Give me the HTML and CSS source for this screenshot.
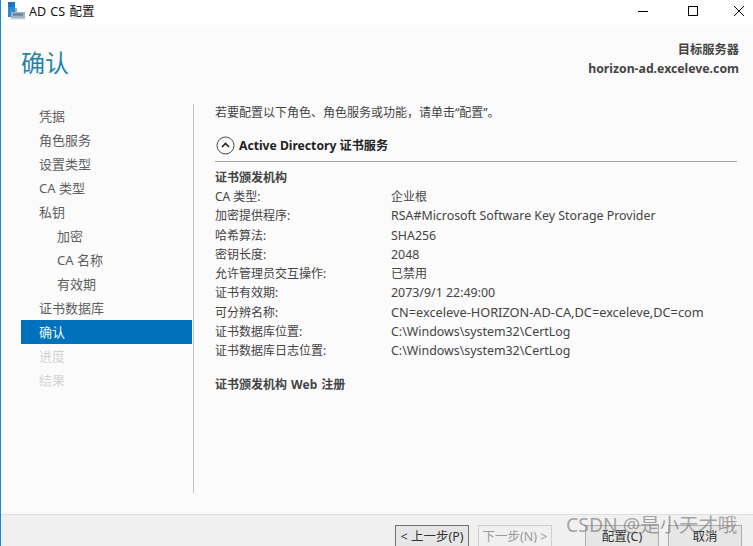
FILE: index.html
```html
<!DOCTYPE html>
<html lang="zh">
<head>
<meta charset="utf-8">
<title>AD CS 配置</title>
<link rel="stylesheet" href="styles.css">
</head>
<body>
<div class="window">
  <div class="titlebar">
    <svg class="app-icon" width="17" height="18" viewBox="0 0 17 18">
      <rect x="0" y="0" width="7" height="5" fill="#1b74c4"/>
      <rect x="0" y="5" width="7" height="10" fill="#2a8ad6"/>
      <rect x="7" y="6" width="2" height="9" fill="#8fb4d0"/>
      <rect x="3" y="10" width="14" height="6" fill="#9fb3c2"/>
      <rect x="5" y="11.5" width="10" height="2" fill="#5f7b92"/>
      <rect x="3" y="16" width="14" height="1.5" fill="#c9d3da"/>
    </svg>
    <span class="app-title">AD CS 配置</span>
    <div class="caption">
      <svg class="cap-btn min" width="12" height="12" viewBox="0 0 12 12"><path d="M1 6.5h10" stroke="#000" stroke-width="1"/></svg>
      <svg class="cap-btn max" width="12" height="12" viewBox="0 0 12 12"><rect x="1.5" y="1.5" width="9" height="9" fill="none" stroke="#000"/></svg>
      <svg class="cap-btn" width="12" height="12" viewBox="0 0 12 12"><path d="M1 1l10 10M11 1L1 11" stroke="#000" stroke-width="1"/></svg>
    </div>
  </div>
  <div class="page">
    <header class="head">
      <h1 class="page-title">确认</h1>
      <div class="server">
        <div>目标服务器</div>
        <div>horizon-ad.exceleve.com</div>
      </div>
    </header>
    <div class="main">
      <nav class="nav">
        <div class="nav-item">凭据</div>
        <div class="nav-item">角色服务</div>
        <div class="nav-item">设置类型</div>
        <div class="nav-item">CA 类型</div>
        <div class="nav-item">私钥</div>
        <div class="nav-item sub">加密</div>
        <div class="nav-item sub">CA 名称</div>
        <div class="nav-item sub">有效期</div>
        <div class="nav-item">证书数据库</div>
        <div class="nav-item active">确认</div>
        <div class="nav-item disabled">进度</div>
        <div class="nav-item disabled">结果</div>
      </nav>
      <section class="content">
        <p class="intro">若要配置以下角色、角色服务或功能，请单击“配置”。</p>
        <div class="section-head">
          <svg width="19" height="19" viewBox="0 0 19 19">
            <circle cx="9.5" cy="9.5" r="8.5" fill="none" stroke="#444" stroke-width="1"/>
            <path d="M6 11l3.5-3.5L13 11" fill="none" stroke="#222" stroke-width="1.6"/>
          </svg>
          <span>Active Directory 证书服务</span>
        </div>
        <h2 class="group">证书颁发机构</h2>
        <dl class="props">
          <dt>CA 类型:</dt><dd class="cjk">企业根</dd>
          <dt>加密提供程序:</dt><dd>RSA#Microsoft Software Key Storage Provider</dd>
          <dt>哈希算法:</dt><dd>SHA256</dd>
          <dt>密钥长度:</dt><dd>2048</dd>
          <dt>允许管理员交互操作:</dt><dd class="cjk">已禁用</dd>
          <dt>证书有效期:</dt><dd>2073/9/1 22:49:00</dd>
          <dt>可分辨名称:</dt><dd class="wide">CN=exceleve-HORIZON-AD-CA,DC=exceleve,DC=com</dd>
          <dt>证书数据库位置:</dt><dd>C:\Windows\system32\CertLog</dd>
          <dt>证书数据库日志位置:</dt><dd>C:\Windows\system32\CertLog</dd>
        </dl>
        <h2 class="group second">证书颁发机构 Web 注册</h2>
      </section>
    </div>
  </div>
  <footer class="footer">
    <button class="btn prev">&lt; 上一步(P)</button>
    <button class="btn next" disabled>下一步(N) &gt;</button>
    <button class="btn conf">配置(C)</button>
    <button class="btn">取消</button>
  </footer>
  <div class="watermark">CSDN @是小天才哦</div>
</div>
</body>
</html>
```
FILE: styles.css
```css
* { box-sizing: border-box; }
html, body { margin: 0; padding: 0; }
body {
  width: 753px;
  height: 546px;
  overflow: hidden;
  font-family: "Noto Sans", "Noto Sans CJK SC", sans-serif;
  font-size: 12.5px;
  color: #444;
  background: #fff;
}
.window {
  position: relative;
  width: 753px;
  height: 546px;
  display: flex;
  flex-direction: column;
  border-left: 1px solid #1e88d8;
}
.titlebar {
  height: 25px;
  display: flex;
  align-items: center;
  background: #fff;
  padding-left: 7px;
  flex: none;
}
.app-icon { margin-right: 4px; margin-top: -3px; }
.app-title { font-size: 12.5px; color: #111; margin-top: -4px; word-spacing: 1px; }
.caption {
  margin-left: auto;
  display: flex;
  gap: 34px;
  padding-right: 8px;
  margin-top: -4px;
}
.cap-btn { display: block; }
.cap-btn.min { margin-right: 4px; }
.page {
  flex: 1;
  display: flex;
  flex-direction: column;
  background: #fbfbfb;
  min-height: 0;
}
.head {
  height: 79px;
  flex: none;
  display: flex;
  justify-content: space-between;
  padding: 0 14px 0 20px;
}
.page-title {
  margin: 22px 0 0;
  font-size: 24px;
  line-height: 32px;
  font-weight: 400;
  color: #1f84a8;
}
.server {
  margin-top: 15px;
  text-align: right;
  font-size: 12.25px;
  line-height: 19px;
  font-weight: 700;
  color: #444;
}
.main { flex: 1; display: flex; min-height: 0; padding-bottom: 21px; }
.nav { width: 171px; margin-left: 20px; flex: none; }
.nav-item {
  height: 24px;
  line-height: 24px;
  padding-left: 18px;
  font-size: 13px;
  color: #5e5e5e;
}
.nav-item.sub { padding-left: 36px; }
.nav-item.active { background: #0072bc; color: #f2f8fc; }
.nav-item.disabled { color: #d4d4d4; }
.content {
  margin-left: 1px;
  flex: 1;
  border-left: 1px solid #c4c4c4;
  padding-left: 21px;
  padding-right: 16px;
}
.intro { margin: 0; line-height: 18px; font-size: 12px; color: #444; }
.section-head {
  margin-top: 10px;
  height: 30px;
  display: flex;
  align-items: center;
  gap: 4px;
  padding-left: 1px;
  padding-bottom: 3px;
  border-bottom: 1px solid #a6a6a6;
  font-weight: 700;
  font-size: 12.15px;
  color: #222;
}
.group {
  margin: 0;
  font-size: 12px;
  font-weight: 700;
  line-height: 19px;
  color: #444;
}
.section-head + .group { margin-top: 6px; }
.group.second { margin-top: 15px; word-spacing: 1px; }
.props {
  margin: 0;
  display: grid;
  grid-template-columns: 176px 1fr;
  grid-auto-rows: 19.25px;
  line-height: 19.25px;
}
.props dt, .props dd { margin: 0; white-space: nowrap; }
.props dt, .props dd.cjk { font-size: 12px; }
.props dd { font-size: 12.4px; }
.props dd.wide { font-size: 12.75px; }
.footer {
  height: 32px;
  flex: none;
  background: #f0f0f0;
  border-top: 1px solid #dfdfdf;
  display: flex;
  padding: 10px 0 0 394px;
  overflow: hidden;
}
.btn {
  width: 74px;
  height: 30px;
  flex: none;
  padding: 0 0 9px;
  border: 1px solid #adadad;
  background: #e6e6e6;
  font: inherit;
  font-size: 12.5px;
  color: #333;
}
.btn.prev { border: 1px solid #707070; margin-right: 9px; }
.btn.next { background: #f0f0f0; border-color: #cfcfcf; color: #9a9a9a; margin-right: 33px; }
.btn.conf { margin-right: 9px; }
.watermark {
  position: absolute;
  left: 565px;
  top: 513px;
  font-size: 19.4px;
  line-height: 24px;
  color: rgba(110, 110, 110, 0.6);
  white-space: nowrap;
}
```
